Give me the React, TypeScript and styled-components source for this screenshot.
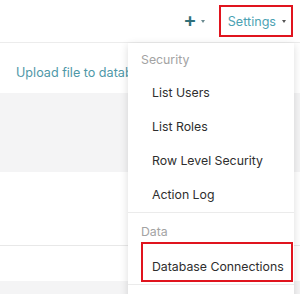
import React from 'react';
import styled, { createGlobalStyle } from 'styled-components';

const GlobalStyle = createGlobalStyle`
    html, body {
        margin: 0;
        padding: 0;
        background: #f4f4f5;
        font-family: Inter, "Noto Sans", sans-serif;
        font-size: 12.3px;
        overflow: hidden;
    }
`;

const Page = styled.div`
    width: 300px;
    height: 294px;
    overflow: hidden;
    position: relative;
    background: #f4f4f5;
`;

const Header = styled.div`
    height: 42px;
    display: flex;
    align-items: center;
    justify-content: flex-end;
    padding-right: 7px;
    background: #fff;
    border-bottom: 1px solid #ececec;
`;

const NavGroup = styled.div`
    display: flex;
    align-items: center;
    gap: 4px;
    margin-right: 14px;
    color: #2f6f79;
`;

const Plus = styled.span`
    font-size: 20px;
    font-weight: 600;
    line-height: 1;
    margin-top: -2px;
`;

const Caret = styled.span<{ $color: string }>`
    width: 0;
    height: 0;
    border-left: 2.5px solid transparent;
    border-right: 2.5px solid transparent;
    border-top: 3px solid ${p => p.$color};
`;

const Highlight = styled.div`
    border: 2px solid #e0141e;
`;

const SettingsButton = styled.div`
    display: flex;
    align-items: center;
    gap: 6px;
    height: 28px;
    padding: 0 5px 0 7px;
    color: #4ba2b3;
    font-size: 12.6px;
`;

const Row = styled.div<{ $h: number; $gray?: boolean; $line?: boolean }>`
    height: ${p => p.$h}px;
    background: ${p => (p.$gray ? '#f4f4f5' : '#fff')};
    border-bottom: ${p => (p.$line ? '1px solid #e8e8e8' : 'none')};
    display: flex;
    align-items: center;
    padding-left: 16px;
`;

const UploadLink = styled.span`
    color: #4f98a8;
    font-size: 12.6px;
    margin-top: 8px;
    white-space: nowrap;
`;

const Menu = styled.div`
    position: absolute;
    top: 43px;
    left: 128px;
    width: 166px;
    bottom: -20px;
    background: #fff;
    box-shadow: 0 2px 8px rgba(0, 0, 0, 0.14);
`;

const GroupLabel = styled.div<{ $h: number }>`
    height: ${p => p.$h}px;
    display: flex;
    align-items: center;
    padding-left: 13px;
    color: #a3a3a3;
`;

const Item = styled.div`
    position: relative;
    height: 34px;
    display: flex;
    align-items: center;
    padding-left: 24px;
    color: #2e2e2e;
    white-space: nowrap;
`;

const Divider = styled.div`
    height: 1px;
    margin: 1px 0 0;
    background: #ebebeb;
`;

const ItemMark = styled.div`
    position: absolute;
    top: -7px;
    bottom: 1px;
    left: 13px;
    right: 1px;
    border: 2px solid #e0141e;
`;

const securityItems = ['List Users', 'List Roles', 'Row Level Security', 'Action Log'];

export default function App() {
    return (
        <Page>
            <GlobalStyle />
            <Header>
                <NavGroup>
                    <Plus>+</Plus>
                    <Caret $color="#6b8a90" />
                </NavGroup>
                <Highlight>
                    <SettingsButton>
                        Settings
                        <Caret $color="#555" />
                    </SettingsButton>
                </Highlight>
            </Header>
            <Row $h={50}>
                <UploadLink>Upload file to database</UploadLink>
            </Row>
            <Row $h={79} $gray />
            <Row $h={73} $line />
            <Row $h={35} />
            <Menu>
                <GroupLabel $h={32}>Security</GroupLabel>
                {securityItems.map(item => (
                    <Item key={item}>{item}</Item>
                ))}
                <Divider />
                <GroupLabel $h={36}>Data</GroupLabel>
                <Item>
                    Database Connections
                    <ItemMark />
                </Item>
                <Divider />
            </Menu>
        </Page>
    );
}
